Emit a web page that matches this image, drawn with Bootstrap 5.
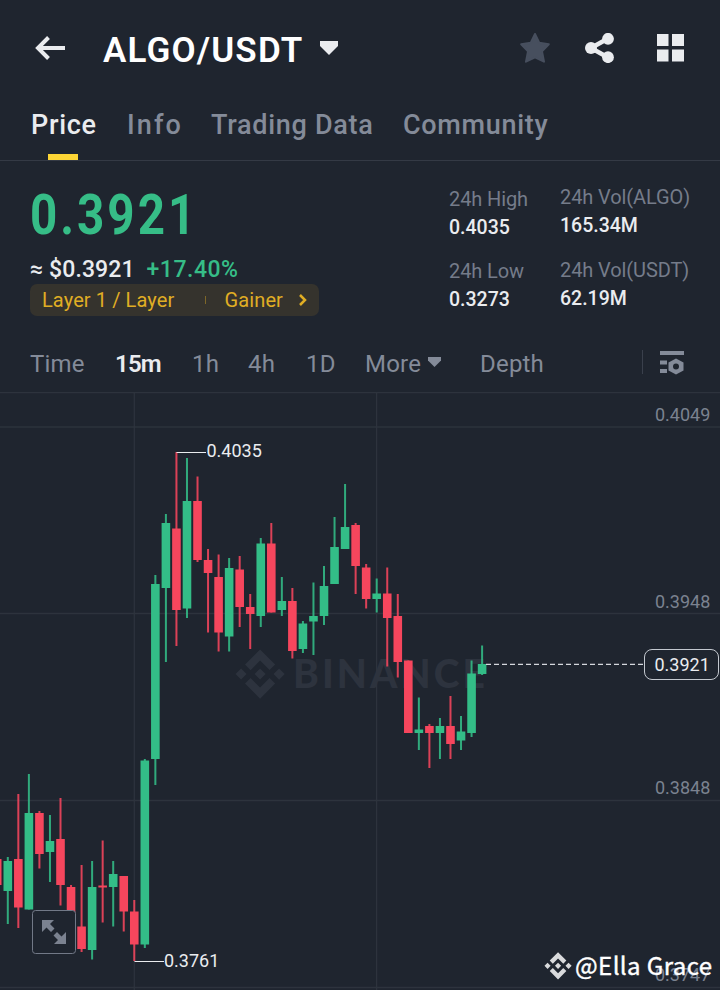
<!DOCTYPE html>
<html lang="en">
<head>
<meta charset="utf-8">
<meta name="viewport" content="width=device-width, initial-scale=1">
<title>ALGO/USDT</title>
<link rel="stylesheet" href="https://cdn.jsdelivr.net/npm/bootstrap@5.3.0/dist/css/bootstrap.min.css">
<style>
body{background:#1f252f;color:#eaecef;font-family:Roboto,"Liberation Sans",sans-serif;width:720px;height:990px;overflow:hidden}
svg{display:block;flex:none}
.dim{color:#848b99}
.topbar{height:96px;padding:0 35px}
.pair{font-size:35px;font-weight:600;line-height:40px;color:#fff;margin:6px 0 0 37px;letter-spacing:1.15px;width:201px;white-space:nowrap}
.tabs{display:grid;grid-template-columns:96px 84px 192px 160px;padding-left:31px;height:65px;border-bottom:1px solid #343a45;font-size:27px;font-weight:500;line-height:58px;letter-spacing:.7px;white-space:nowrap}
.tab-on{color:#eaecef;position:relative}
.tab-on::after{content:"";position:absolute;left:17px;bottom:0;width:30px;height:6px;background:#fcd535}
.wide{letter-spacing:2.1px}
.summary{height:174px;padding-left:30px}
.left-col{width:419px;padding-top:21px}
.squeeze{display:inline-block;transform-origin:0 50%;white-space:nowrap}
.last{font-size:56px;font-weight:700;line-height:66px;color:#36bd87;transform:scaleX(.85);letter-spacing:3.5px}
.approx{font-size:23px;font-weight:500;line-height:30px;margin-top:9px;height:28px;letter-spacing:.1px;white-space:nowrap}
.up{color:#36bd87;margin-left:12px;letter-spacing:.5px}
.tagline{width:289px;height:32px;margin-top:1px;border-radius:7px;background:#35332d;color:#e0ae24;font-size:20px;line-height:32px;letter-spacing:.1px;padding:0 12px;white-space:nowrap}
.sep{width:1px;height:8px;background:#7d6728}
.stat{font-size:20px;line-height:28px;white-space:nowrap}
.stat b{display:block;font-weight:500;font-size:19.5px;line-height:30px;height:28px;color:#eaecef}
.stat span{color:#757c8a;letter-spacing:-.1px}
.stat+.stat{margin-top:16px}
.intervals{display:grid;grid-template-columns:85px 77px 56px 58px 59px 115px 162px 1px 1fr;height:57px;padding-left:30px;font-size:24px;line-height:58px;white-space:nowrap;letter-spacing:.2px}
.intervals .on{color:#eaecef;font-weight:600;letter-spacing:-.8px}
.chart{width:720px;height:598px}
.chart text{font-family:Roboto,"Liberation Sans",sans-serif;font-size:18px}
</style>
</head>
<body>
<header class="topbar d-flex align-items-center">
  <svg width="31" height="24" viewBox="0 0 31 24" fill="none" stroke="#eaecef" stroke-width="4"><path d="M30 12H3M13.500 1.500L3 12l10.500 10.500"/></svg>
  <h1 class="pair mb-0">ALGO/USDT</h1>
  <svg width="18" height="14" viewBox="0 0 18 14" style="margin-left:16px" fill="#eaecef"><path d="M0 0h18v5L9 14 0 5z"/></svg>
  <svg class="ms-auto" width="30" height="30" viewBox="0 0 30 30" fill="#474f5e" stroke="#474f5e" stroke-width="2" stroke-linejoin="round"><path d="M15 1l4.200 8.800 9.600 1.400-6.800 7.200 2 10.300-9-4.400-9 4.400 2-10.300L1.200 11.200l9.600-1.400z"/></svg>
  <svg width="30" height="30" viewBox="0 0 30 30" style="margin-left:35px" fill="#eaecef"><path d="M23 5.500L6 15l17 9.500" fill="none" stroke="#eaecef" stroke-width="4.500"/><circle cx="23" cy="5.800" r="5.900"/><circle cx="6" cy="15" r="6"/><circle cx="23" cy="24.200" r="5.900"/></svg>
  <svg width="28" height="28" viewBox="0 0 28 28" style="margin-left:42px" fill="#eaecef"><path d="M0 0h11.500v12H0zM15 0h12v12H15zM0 15.500h11.500v12H0zM15 15.500h12v12H15z"/></svg>
</header>
<nav class="tabs dim">
  <div class="tab-on">Price</div><div class="wide">Info</div><div>Trading Data</div><div>Community</div>
</nav>
<section class="summary d-flex">
  <div class="left-col">
    <div style="height:64px"><span class="last squeeze">0.3921</span></div>
    <div class="approx">≈ $0.3921<span class="up">+17.40%</span></div>
    <div class="tagline d-flex align-items-center"><span>Layer 1 / Layer</span><span class="sep ms-auto"></span><span style="margin-left:19px">Gainer</span>
      <svg width="8" height="12" viewBox="0 0 8 12" style="margin-left:16px" fill="none" stroke="#e0ae24" stroke-width="2.500"><path d="M1 1l5 5-5 5"/></svg></div>
  </div>
  <div style="width:111px;padding-top:24px">
    <div class="stat"><span>24h High</span><b>0.4035</b></div>
    <div class="stat"><span>24h Low</span><b>0.3273</b></div>
  </div>
  <div style="padding-top:22px">
    <div class="stat"><span>24h Vol(ALGO)</span><b>165.34M</b></div>
    <div class="stat" style="margin-top:17px"><span>24h Vol(USDT)</span><b>62.19M</b></div>
  </div>
</section>
<nav class="intervals dim">
  <div>Time</div><div class="on">15m</div><div>1h</div><div>4h</div><div>1D</div>
  <div class="d-flex align-items-center" style="height:58px">More<svg width="13" height="10" viewBox="0 0 13 10" style="margin:-4px 0 0 7px" fill="#848b99"><path d="M0 0h13v3.500L6.500 10 0 3.500z"/></svg></div>
  <div>Depth</div><div style="background:#3a404c;height:24px;margin-top:15px"></div>
  <div style="padding:16px 0 0 17px"><svg width="24" height="24" viewBox="0 0 24 24" fill="#848b99"><path d="M0 0h24v4H0zM0 9.500h7v4H0zM0 18h7v4H0z"/><path fill-rule="evenodd" d="M16 7.500l7.500 4v8l-7.500 4-7.500-4v-8zM16 12.500a3 3 0 100 6 3 3 0 000-6z"/></svg></div>
</nav>
<svg class="chart" viewBox="0 392 720 598">
  <defs><path id="bn" d="M16.624 13.9202l2.7175 2.7154-7.353 7.353-7.353-7.352 2.7175-2.7164 4.6355 4.6595 4.6356-4.6595zm4.6366-4.6366L24 12l-2.7154 2.7164L18.5682 12l2.6924-2.7164zm-9.272.001l2.7163 2.6914-2.7164 2.7174v-.001L9.2721 12l2.7164-2.7154zm-9.2722-.001L5.4088 12l-2.6914 2.6924L0 12l2.7164-2.7164zM11.9885.0115l7.353 7.329-2.7174 2.7154-4.6356-4.6356-4.6355 4.6595-2.7174-2.7154 7.353-7.353z"/></defs>
  <path d="M0 392.500h720M0 427h720M0 613.500h720M0 800.500h720M0 987.500h720M134.300 393v597M376.600 393v597" stroke="#2d333d" stroke-width="1.300"/>
  <use href="#bn" transform="translate(235.500 649.500) scale(2.050)" fill="#2d333e"/>
  <text x="293" y="688" style="font-family:Lato;font-weight:900;font-size:39px" textLength="192" fill="#2d333e">BINANCE</text>
  <g id="candles"></g>
  <path d="M176.500 452.500H206M134.500 961.500H164" stroke="#eaecef" stroke-width="1.200"/>
  <g fill="#eaecef"><text x="206.500" y="457">0.4035</text><text x="164" y="967">0.3761</text></g>
  <g fill="#7b8290"><text x="655" y="421">0.4049</text><text x="655" y="608">0.3948</text><text x="655" y="794">0.3848</text><text x="655" y="981">0.3747</text></g>
  <path d="M486 664.300H644" stroke="#d5d8dd" stroke-width="1.200" stroke-dasharray="5 3"/>
  <rect x="644.500" y="649.500" width="74" height="30" rx="7.500" fill="#1f252f" stroke="#c3c8cf"/>
  <text x="654.500" y="671" fill="#eaecef">0.3921</text>
  <rect x="32.500" y="910.500" width="43" height="43" rx="3" fill="#1f252f" stroke="#727987"/>
  <path fill="#7b8290" d="M42 920h12l-4 4 4.500 4.500-3.500 3.500-4.500-4.500L42 932zM66 944H54l4-4-4.500-4.500L57 932l4.500 4.500L66 932z"/>
  <use href="#bn" transform="translate(544.500 952.300) scale(1.130)" fill="#d9dadc"/>
  <text x="575" y="975" fill="#fff" textLength="137" style="font-family:'Noto Sans CJK SC',sans-serif;font-size:24px;font-weight:400;stroke:#fff;stroke-width:.4px">@Ella Grace</text>
</svg>
<script>
// Each candle: high, body top, body bottom, low, direction (1 = up)
const rows=[[857,861,891,924,1],[794,859,907.5,928,0],[774,813,909.5,909.5,1],[811,813,854,868.5,0],[815,841,852,882,1],[798,839,885,905.5,0],[885,887,915,915,0],[865,926.5,949,952,0],[861,887,950,959.5,1],[840.5,885.5,887.5,922.5,0],[861,874,887,926.5,1],[876,876,911.5,931.5,0],[900,911.5,944.5,961,0],[759,760.5,944.5,948,1],[575,584,759,785,1],[514,523,588,662,1],[452,528.5,610,646,0],[458,501,608.5,618,1],[476.5,501,560,562,0],[549,560,573,632.5,0],[554.5,577,632.5,651.5,0],[558,568,636.5,651.5,1],[556,569.5,607,627,0],[594,607,614,649,0],[538,543.5,616,627,1],[523,543.5,612.5,612.5,0],[577,601,610,616,1],[588,601,651,658.5,0],[621,623.5,649,653,1],[582.5,616,621.5,655,1],[566,586,616,625,1],[517,547,584,584,1],[484,527,549,549,1],[523,525,566,594,0],[564,567.5,599,608.5,0],[578.5,593.5,599,612.5,1],[567.5,593.5,618,666.5,0],[594,616,662,677.5,0],[660.5,660.5,733,733,0],[697.5,729.5,733,750,1],[724,726,733,768,0],[718,726,733,759,1],[696,726,744,759,0],[716,731.5,740.5,750,1],[660.5,673.5,733,737,1],[645.5,664,674,675,1]];
let out='<rect x="-7" y="859" width="8.500" height="26" fill="#f6465d"/>';
rows.forEach(([h,t,b,l,up],i)=>{
  const x=7.8+10.54*i,c=up?'#33bd87':'#f6465d';
  out+=`<rect x="${x-1}" y="${h}" width="2" height="${l-h}" fill="${c}" opacity=".88"/><rect x="${x-4.3}" y="${t}" width="8.6" height="${b-t}" fill="${c}"/>`;
});
document.getElementById('candles').innerHTML=out;
</script>
<script src="https://cdn.jsdelivr.net/npm/bootstrap@5.3.0/dist/js/bootstrap.bundle.min.js"></script>
</body>
</html>
